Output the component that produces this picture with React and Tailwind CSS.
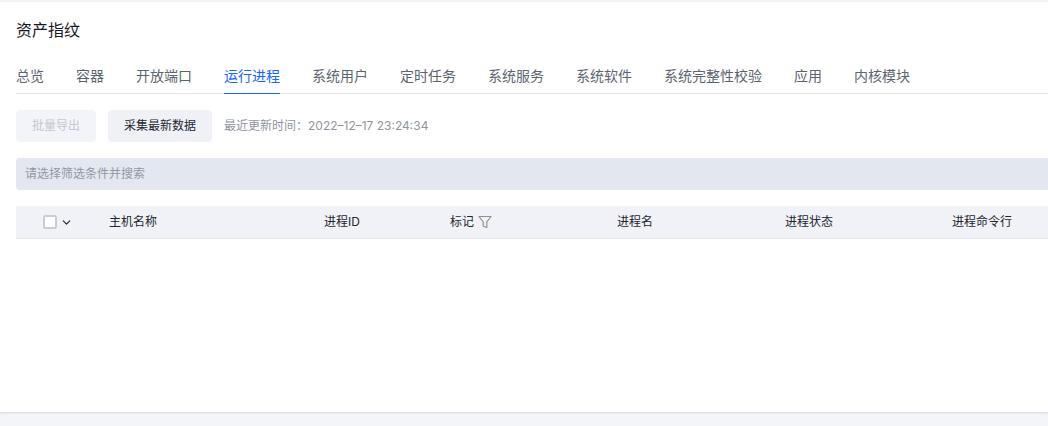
// Asset fingerprint page: tabs, toolbar, search bar and an empty process table.
import { ChevronDown } from 'lucide-react'

const tabs = ['总览', '容器', '开放端口', '运行进程', '系统用户', '定时任务', '系统服务', '系统软件', '系统完整性校验', '应用', '内核模块']

function FilterIcon() {
  return (
    <svg width="14" height="14" viewBox="0 0 14 14" fill="none" stroke="#8b909a" strokeWidth="1.2" className="ml-1">
      <path d="M1 1.5h12L8.8 7v5.5l-3.6-1.2V7z" strokeLinejoin="round" />
    </svg>
  )
}

export default function App() {
  return (
    <div className="h-[426px] overflow-hidden bg-[#f4f5f9] pt-[2px] font-['Inter','Noto_Sans_CJK_SC',sans-serif]">
      <div className="h-[410px] bg-white pl-4 pt-4 shadow-[0_1px_2px_rgba(0,0,0,0.12)]">
        <h1 className="text-base leading-6 font-normal text-[#16191f]">资产指纹</h1>

        <div className="mt-[23px] flex gap-8 border-b border-[#e3e5ea]">
          {tabs.map((tab) => (
            <div
              key={tab}
              className={
                tab === '运行进程'
                  ? '-mb-px border-b border-[#1664ff] pb-[6px] text-sm leading-[22px] text-[#1664ff]'
                  : 'pb-[6px] text-sm leading-[22px] text-[#5c6470]'
              }
            >
              {tab}
            </div>
          ))}
        </div>

        <div className="mt-4 flex items-center">
          <button type="button" className="h-8 w-20 rounded-sm bg-[#f3f4f9] text-xs text-[#c4c8d0]">
            批量导出
          </button>
          <button type="button" className="ml-3 h-8 w-[104px] rounded-sm bg-[#f0f1f6] text-xs text-[#22262e]">
            采集最新数据
          </button>
          <span className="ml-3 text-xs text-[#8f959f]">最近更新时间：2022–12–17 23:24:34</span>
        </div>

        <div className="mt-4 flex h-8 items-center rounded-l-sm bg-[#e3e7f0] pl-[9px] text-xs text-[#9298a3]">
          请选择筛选条件并搜索
        </div>

        <div className="mt-4 grid h-[33px] grid-cols-[93px_215px_126px_167px_168px_167px_1fr] items-center border-b border-[#e4e6ed] bg-[#f1f2f8] text-xs text-[#22262e]">
          <div className="flex items-center pl-[27px]">
            <span className="h-[14px] w-[14px] rounded-[2px] border-2 border-[#c9cdd6] bg-white" />
            <ChevronDown size={13} strokeWidth={2} className="ml-[3px] text-[#22262e]" />
          </div>
          <div>主机名称</div>
          <div>进程ID</div>
          <div className="flex items-center">
            标记
            <FilterIcon />
          </div>
          <div>进程名</div>
          <div>进程状态</div>
          <div>进程命令行</div>
        </div>
      </div>
    </div>
  )
}
